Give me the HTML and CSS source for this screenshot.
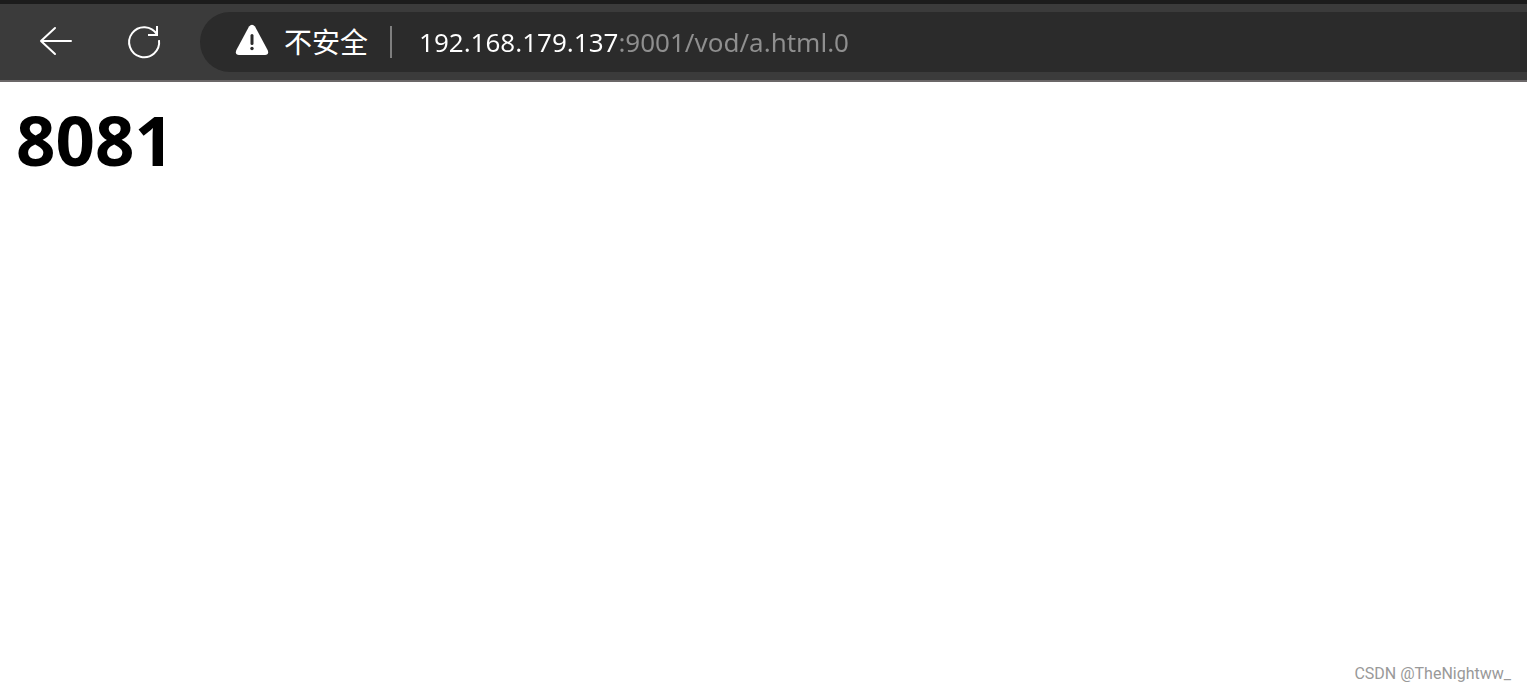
FILE: index.html
```
<!DOCTYPE html>
<html lang="zh-CN">
<head>
<meta charset="utf-8">
<title>8081</title>
<link rel="stylesheet" href="styles.css">
</head>
<body>
<header class="toolbar">
  <button class="nav-button" type="button" aria-label="返回">
    <svg class="nav-icon" viewBox="0 0 36 36" fill="none" stroke="currentColor" stroke-width="2" stroke-linecap="round" stroke-linejoin="round"><path d="M17 4 3 17 17 30M3 17H33"/></svg>
  </button>
  <button class="nav-button" type="button" aria-label="刷新">
    <svg class="nav-icon" viewBox="0 0 36 36" fill="none" stroke="currentColor" stroke-width="2"><path d="M33 16.200A15 15 0 1 1 31 10.500M31 2V11H22"/></svg>
  </button>
  <div class="address">
    <button class="security" type="button">
      <svg class="warning-icon" viewBox="0 0 34 32"><path fill="#fff" d="M14 1.500Q17-2 20 1.500L32.600 25Q34.500 30 30 30H4Q-.5 30 1.400 25Z"/><path d="M17 10.500v8" stroke="#2b2b2b" stroke-width="3" stroke-linecap="round"/><circle cx="17" cy="23.500" r="1.700" fill="#2b2b2b"/></svg>
      <span>不安全</span>
    </button>
    <span class="divider"></span>
    <input class="url" type="text" aria-label="地址" value="192.168.179.137:9001/vod/a.html.0" spellcheck="false">
  </div>
</header>
<main class="page">
  <h1 class="title">8081</h1>
</main>
<footer class="watermark">CSDN @TheNightww_</footer>
</body>
</html>
```
FILE: styles.css
```
* {
  box-sizing: border-box;
}

body {
  margin: 0;
  min-height: 100vh;
  display: flex;
  flex-direction: column;
  background: #fff;
  font-family: "Noto Sans", "Noto Sans CJK SC", sans-serif;
}

.toolbar {
  display: flex;
  align-items: center;
  gap: 52px;
  padding: 8px 0 8px 38px;
  border-top: 4px solid #1c1c1c;
  border-bottom: 2px solid #6b6768;
  background: #3b3b3b;
}

button {
  padding: 0;
  border: 0;
  background: none;
  color: #fff;
  font: inherit;
}

.nav-button,
.nav-icon {
  display: block;
  width: 36px;
  height: 36px;
}

.address {
  flex: 1;
  display: flex;
  align-items: center;
  height: 60px;
  margin-left: -14px;
  padding-left: 35px;
  border-radius: 30px 0 0 30px;
  background: #2b2b2b;
}

.security {
  display: flex;
  align-items: center;
  gap: 15px;
  padding-bottom: 2px;
  font-family: "Noto Sans CJK SC", sans-serif;
  font-size: 28px;
  line-height: 40px;
}

.warning-icon {
  width: 34px;
  height: 32px;
  overflow: visible;
}

.divider {
  width: 2px;
  height: 32px;
  margin: 0 27px 0 22px;
  background: #7f7f7f;
}

.url {
  flex: 1;
  min-width: 0;
  padding: 0;
  border: 0;
  outline: 0;
  font-family: "Noto Sans", sans-serif;
  font-size: 26px;
  line-height: 40px;
  color: transparent;
  caret-color: #fff;
  background: linear-gradient(to right, #fff 200px, #8f8f8f 200px);
  -webkit-background-clip: text;
  background-clip: text;
}

.page {
  flex: 1;
  padding: 10px 16px;
}

.title {
  margin: 0;
  font-size: 69px;
  line-height: 94px;
}

.watermark {
  padding: 0 16px 8px;
  text-align: right;
  font-family: Roboto, sans-serif;
  font-size: 16px;
  line-height: 20px;
  color: #999;
}
```
